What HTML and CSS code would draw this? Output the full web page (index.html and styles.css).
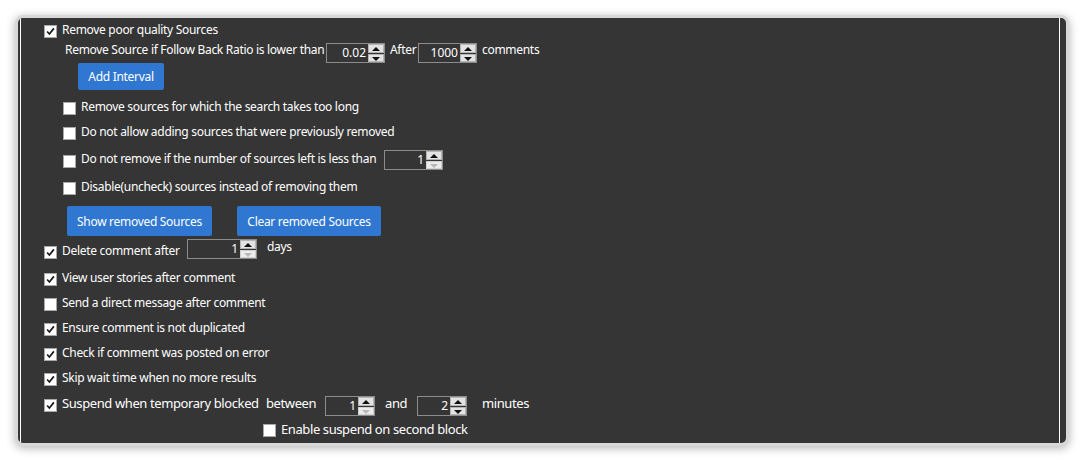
FILE: index.html
```html
<!DOCTYPE html>
<html>
<head>
    <meta charset="UTF-8">
    <title>Comment Settings</title>
    <link rel="stylesheet" href="styles.css">
</head>
<body>
    <div class="window">
        <div class="panel">

            <div class="row r25">
                <span class="check on"><svg viewBox="0 0 13 13"><path d="M2.5 6.5 L5.2 9.5 L10.5 2.8" /></svg></span>
                <span class="label">Remove poor quality Sources</span>
            </div>

            <div class="row r-ratio">
                <span class="label lbl-ratio">Remove Source if Follow Back Ratio is lower than</span>
                <div class="spin w59">
                    <span class="val">0.02</span>
                    <span class="btns"><span class="up"></span><span class="down"></span></span>
                </div>
                <span class="label lbl-after">After</span>
                <div class="spin w59">
                    <span class="val">1000</span>
                    <span class="btns"><span class="up"></span><span class="down"></span></span>
                </div>
                <span class="label lbl-comments">comments</span>
            </div>

            <button class="blue b-interval">Add Interval</button>

            <div class="sub">
                <div class="row r25">
                    <span class="check"></span>
                    <span class="label">Remove sources for which the search takes too long</span>
                </div>
                <div class="row r25">
                    <span class="check"></span>
                    <span class="label">Do not allow adding sources that were previously removed</span>
                </div>
                <div class="row r-min">
                    <span class="check"></span>
                    <span class="label lbl-min">Do not remove if the number of sources left is less than</span>
                    <div class="spin w59">
                        <span class="val">1</span>
                        <span class="btns"><span class="up"></span><span class="down off"></span></span>
                    </div>
                </div>
                <div class="row r25">
                    <span class="check"></span>
                    <span class="label">Disable(uncheck) sources instead of removing them</span>
                </div>
            </div>

            <div class="actions">
                <button class="blue b-show">Show removed Sources</button>
                <button class="blue b-clear">Clear removed Sources</button>
            </div>

            <div class="row r-delete">
                <span class="check on"><svg viewBox="0 0 13 13"><path d="M2.5 6.5 L5.2 9.5 L10.5 2.8" /></svg></span>
                <span class="label lbl-delete">Delete comment after</span>
                <div class="spin w70">
                    <span class="val">1</span>
                    <span class="btns"><span class="up"></span><span class="down off"></span></span>
                </div>
                <span class="label lbl-days">days</span>
            </div>

            <div class="row r25">
                <span class="check on"><svg viewBox="0 0 13 13"><path d="M2.5 6.5 L5.2 9.5 L10.5 2.8" /></svg></span>
                <span class="label">View user stories after comment</span>
            </div>
            <div class="row r25">
                <span class="check"></span>
                <span class="label">Send a direct message after comment</span>
            </div>
            <div class="row r25">
                <span class="check on"><svg viewBox="0 0 13 13"><path d="M2.5 6.5 L5.2 9.5 L10.5 2.8" /></svg></span>
                <span class="label">Ensure comment is not duplicated</span>
            </div>
            <div class="row r25">
                <span class="check on"><svg viewBox="0 0 13 13"><path d="M2.5 6.5 L5.2 9.5 L10.5 2.8" /></svg></span>
                <span class="label">Check if comment was posted on error</span>
            </div>
            <div class="row r25">
                <span class="check on"><svg viewBox="0 0 13 13"><path d="M2.5 6.5 L5.2 9.5 L10.5 2.8" /></svg></span>
                <span class="label">Skip wait time when no more results</span>
            </div>

            <div class="row r-suspend big">
                <span class="check on"><svg viewBox="0 0 13 13"><path d="M2.5 6.5 L5.2 9.5 L10.5 2.8" /></svg></span>
                <span class="label lbl-suspend">Suspend when temporary blocked</span>
                <span class="label lbl-between">between</span>
                <div class="spin w50">
                    <span class="val">1</span>
                    <span class="btns"><span class="up"></span><span class="down off"></span></span>
                </div>
                <span class="label lbl-and">and</span>
                <div class="spin w50">
                    <span class="val">2</span>
                    <span class="btns"><span class="up"></span><span class="down"></span></span>
                </div>
                <span class="label lbl-minutes">minutes</span>
            </div>

            <div class="row r25 r-second big">
                <span class="check"></span>
                <span class="label">Enable suspend on second block</span>
            </div>

        </div>
    </div>
</body>
</html>
```

FILE: styles.css
```css
* {
    margin: 0;
    padding: 0;
    box-sizing: border-box;
}

body {
    background: #ffffff;
    font-family: "Noto Sans", "Open Sans", sans-serif;
    font-size: 12px;
    color: #ffffff;
    padding: 15px;
}

.window {
    width: 1054px;
    height: 431px;
    border: 3px solid #d8d8d8;
    border-radius: 8px;
    background: #353535;
    box-shadow: 0 2px 10px rgba(0, 0, 0, 0.3);
    padding: 0 6px 0 2px;
    overflow: hidden;
}

.panel {
    height: 100%;
    border-left: 1px solid #ffffff;
    border-right: 1px solid #ffffff;
    padding-left: 23px;
    overflow: hidden;
}

.row {
    display: flex;
    align-items: center;
}

.r25 {
    height: 25px;
}

.label {
    line-height: 14px;
    white-space: nowrap;
    letter-spacing: -0.3px;
}

.r25 > .label,
.r-min > .label,
.r-suspend > .label {
    margin-bottom: 2px;
}

/* the suspend options are set a size larger */
.big > .label {
    font-size: 13px;
    letter-spacing: -0.4px;
}

/* checkbox */

.check {
    flex: none;
    width: 13px;
    height: 13px;
    margin-top: 2px;
    margin-right: 5px;
    background: #ffffff;
    border: 1px solid #a8a8a8;
    display: flex;
}

.check svg {
    width: 11px;
    height: 11px;
}

.check path {
    fill: none;
    stroke: #1a1a1a;
    stroke-width: 2;
}

/* numeric up/down */

.spin {
    flex: none;
    display: flex;
    height: 20px;
    border: 1px solid #8c8c8c;
    background: #353535;
}

.w59 { width: 59px; }
.w70 { width: 70px; }
.w50 { width: 50px; }

.spin .val {
    flex: 1;
    text-align: right;
    line-height: 18px;
    padding-right: 2px;
}

.spin .btns {
    width: 16px;
    display: flex;
    flex-direction: column;
    gap: 1px;
}

.spin .btns span {
    flex: 1;
    background: #e3e3e3;
    border: 1px solid #b4b4b4;
    position: relative;
}

.spin .btns span::after {
    content: "";
    position: absolute;
    left: 3px;
    top: 2px;
    border-left: 4px solid transparent;
    border-right: 4px solid transparent;
}

.spin .up::after {
    border-bottom: 4px solid #111111;
}

.spin .down::after {
    border-top: 4px solid #111111;
}

.spin .down.off::after {
    border-top-color: #b8b8b8;
}

.spin .btns .off {
    background: #ececec;
    border-color: #d0d0d0;
}

/* buttons */

.blue {
    display: block;
    background: #2f77d1;
    color: #ffffff;
    border: 0;
    border-radius: 2px;
    font-family: inherit;
    font-size: 12px;
    letter-spacing: -0.3px;
}

/* rows */

.r-ratio {
    height: 20px;
    align-items: flex-start;
    padding-left: 21px;
}

.r-ratio .label {
    line-height: 13px;
}

.lbl-ratio { width: 261px; }
.lbl-after { width: 33px; padding-left: 5px; }
.lbl-comments { padding-left: 5px; }

.b-interval {
    width: 86px;
    height: 27px;
    margin-left: 34px;
}

.sub {
    padding-left: 19px;
    padding-top: 5px;
}

.r-min {
    height: 30px;
}

.lbl-min { width: 303px; }

.actions {
    display: flex;
    gap: 25px;
    padding-left: 23px;
    margin-top: 6px;
}

.b-show {
    width: 145px;
    height: 30px;
}

.b-clear {
    width: 144px;
    height: 30px;
}

.r-delete {
    height: 30px;
    align-items: flex-start;
}

.r-delete .check { margin-top: 10px; }
.r-delete .label { margin-top: 8px; }
.r-delete .spin { margin-top: 3px; }

.lbl-delete { width: 125px; }
.r-delete .lbl-days { margin-top: 4px; padding-left: 10px; }

.r-suspend {
    height: 26px;
}

.r-suspend .spin { margin-top: 4px; }

.lbl-suspend { width: 204px; }
.lbl-between { width: 59px; }
.lbl-and { width: 42px; padding-left: 10px; }
.lbl-minutes { padding-left: 15px; }

.r-second {
    padding-left: 219px;
}
```
